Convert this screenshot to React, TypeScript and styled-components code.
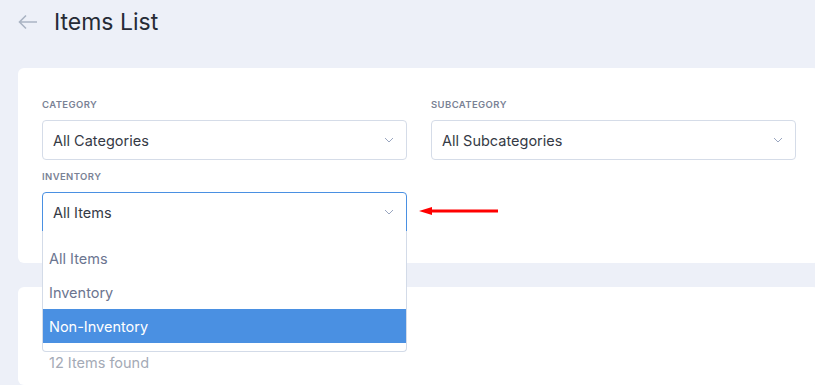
import { createGlobalStyle, styled } from "styled-components";

const GlobalStyle = createGlobalStyle`
  html, body {
    margin: 0;
    padding: 0;
    overflow: hidden;
    background-color: #edf0f8;
    font-family: Inter, "Noto Sans", sans-serif;
  }
`;

const Page = styled.div`
  width: 837px;
  height: 385px;
  padding: 0 18px;
  box-sizing: border-box;
  display: flex;
  flex-direction: column;
  gap: 24px;
`;

const Header = styled.header`
  height: 44px;
  display: flex;
  align-items: flex-start;
  padding-top: 7px;
  box-sizing: border-box;
  gap: 16px;
`;

const BackBtn = styled.span`
  display: flex;
  align-items: center;
  height: 30px;
  color: #aab4c3;
`;

const Title = styled.h1`
  margin: 0;
  font-size: 23px;
  font-weight: 400;
  line-height: 30px;
  color: #262b36;
`;

const Card = styled.section<{ $height: number }>`
  background: #ffffff;
  border-radius: 6px;
  height: ${(p) => p.$height}px;
  flex-shrink: 0;
  box-sizing: border-box;
  padding: 31px 24px 0;
  position: relative;
`;

const Grid = styled.div`
  display: grid;
  grid-template-columns: 365px 365px;
  column-gap: 24px;
  row-gap: 11px;
`;

const Field = styled.div`
  display: flex;
  flex-direction: column;
  gap: 9px;
  position: relative;
`;

const Label = styled.label`
  font-size: 9.5px;
  font-weight: 600;
  letter-spacing: 0.4px;
  text-transform: uppercase;
  color: #7a8295;
  line-height: 12px;
`;

const Select = styled.div<{ $open?: boolean }>`
  height: 40px;
  box-sizing: border-box;
  display: flex;
  align-items: center;
  justify-content: space-between;
  padding: 0 12px 0 10px;
  border: 1px solid ${(p) => (p.$open ? "#4a90e2" : "#d5dce8")};
  border-radius: ${(p) => (p.$open ? "4px 4px 0 0" : "4px")};
  font-size: 14.5px;
  color: #353a45;
  background: #fff;
`;

const Chevron = styled.span`
  display: flex;
  color: #9aa6c0;
`;

const Menu = styled.ul`
  position: absolute;
  top: 60px;
  left: 0;
  right: 0;
  margin: 0;
  padding: 10px 0 8px;
  list-style: none;
  background: #fff;
  border: 1px solid #d3dbe8;
  border-top: none;
  border-radius: 0 0 4px 4px;
  z-index: 2;
`;

const Option = styled.li<{ $active?: boolean }>`
  height: 34px;
  display: flex;
  align-items: center;
  padding: 0 6px;
  font-size: 14.5px;
  color: ${(p) => (p.$active ? "#ffffff" : "#6b7590")};
  background: ${(p) => (p.$active ? "#4a90e2" : "transparent")};
`;

const Pointer = styled.span`
  position: absolute;
  left: 377px;
  top: 36px;
  display: flex;
`;

const Found = styled.div`
  position: absolute;
  left: 31px;
  top: 67px;
  font-size: 14.5px;
  color: #a4aab6;
`;

function ChevronIcon() {
  return (
    <svg width="10" height="6" viewBox="0 0 10 6" fill="none">
      <path d="M1 1l4 4 4-4" stroke="currentColor" strokeWidth="1" />
    </svg>
  );
}

export default function App() {
  return (
    <>
      <GlobalStyle />
      <Page>
        <Header>
          <BackBtn>
            <svg width="20" height="16" viewBox="0 0 20 16" fill="none">
              <path d="M19 8H2M8 1.5L1.5 8 8 14.5" stroke="currentColor" strokeWidth="1.6" />
            </svg>
          </BackBtn>
          <Title>Items List</Title>
        </Header>
        <Card $height={195}>
          <Grid>
            <Field>
              <Label>Category</Label>
              <Select>
                All Categories
                <Chevron>
                  <ChevronIcon />
                </Chevron>
              </Select>
            </Field>
            <Field>
              <Label>Subcategory</Label>
              <Select>
                All Subcategories
                <Chevron>
                  <ChevronIcon />
                </Chevron>
              </Select>
            </Field>
            <Field>
              <Label>Inventory</Label>
              <Select $open>
                All Items
                <Chevron>
                  <ChevronIcon />
                </Chevron>
              </Select>
              <Menu>
                <Option>All Items</Option>
                <Option>Inventory</Option>
                <Option $active>Non-Inventory</Option>
              </Menu>
              <Pointer>
                <svg width="80" height="8" viewBox="0 0 80 8">
                  <path d="M12 4H79" stroke="#ff0000" strokeWidth="3" />
                  <path d="M0 4L13 0V8Z" fill="#ff0000" />
                </svg>
              </Pointer>
            </Field>
          </Grid>
        </Card>
        <Card $height={98}>
          <Found>12 Items found</Found>
        </Card>
      </Page>
    </>
  );
}
